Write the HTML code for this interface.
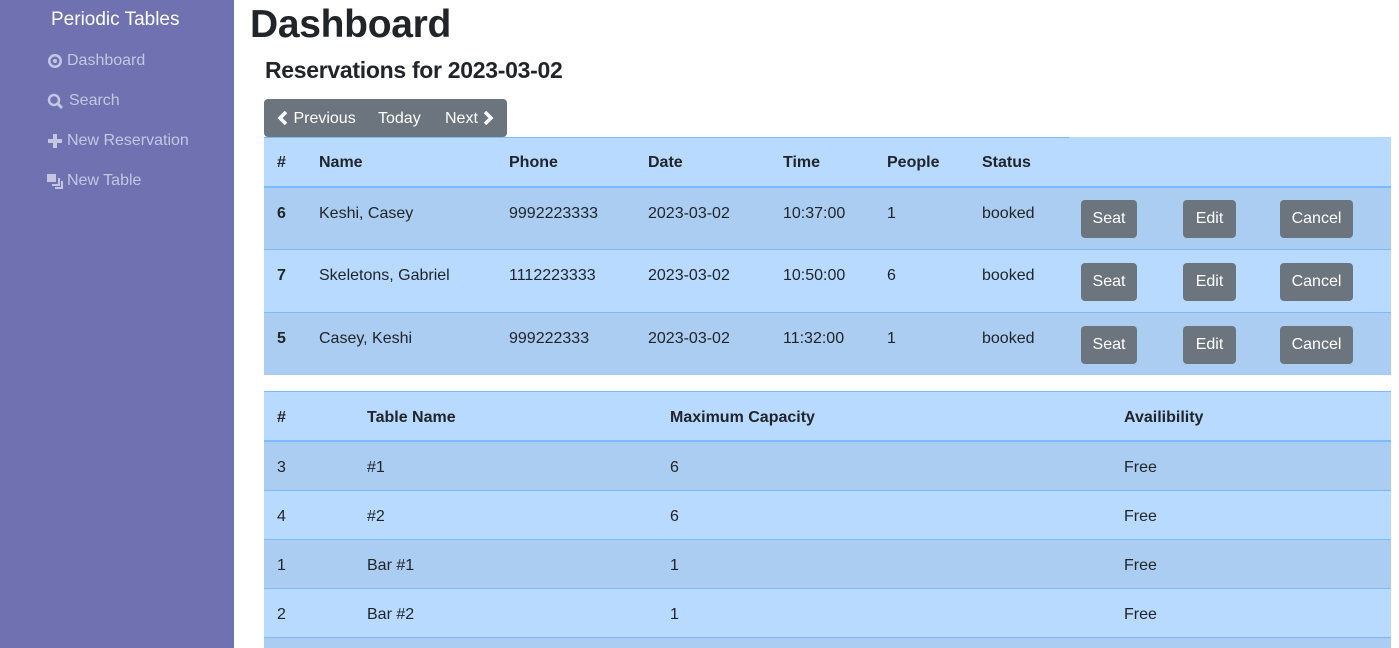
<!DOCTYPE html>
<html><head><style>
*{box-sizing:border-box;margin:0;padding:0}
html,body{width:1399px;height:648px;overflow:hidden}
body{background:#fff;font-family:"Liberation Sans",sans-serif;font-size:16px;color:#212529;position:relative}
.side{position:absolute;left:0;top:0;width:234px;height:648px;background:#6f71b1}
.brand{position:absolute;left:51px;top:9px;color:#fff;font-size:19px}
.nav{position:absolute;left:47px;color:#c4c6e2;font-size:16px;display:flex;align-items:center;gap:4px}
h1{position:absolute;left:250px;top:3px;font-size:39px;font-weight:bold;letter-spacing:-0.3px}
h4{position:absolute;left:265px;top:57px;font-size:23px;font-weight:bold;letter-spacing:-0.3px}
.grp{position:absolute;left:264px;top:99px;height:38px;width:243px;background:#6c757d;border-radius:4px;color:#fff;overflow:hidden}
.grp span{position:absolute;top:10px;line-height:19px;height:19px}
.grp svg{vertical-align:-2px}
.t{position:absolute;left:264px;width:1127px;overflow:hidden}
.r{position:absolute;left:0;width:1127px;border-top:1px solid #7abaff}
.r div{position:absolute}
.b{position:absolute;background:#6c757d;color:#fff;border-radius:4px;height:38px;line-height:38px;text-align:center}
</style></head><body>
<div class="side">
<div class="brand">Periodic Tables</div>
<div class="nav" style="top:52px"><svg width="16" height="16" viewBox="0 0 16 16"><circle cx="8" cy="8" r="7" fill="#c4c6e2"/><circle cx="8" cy="8" r="4.5" fill="#6f71b1"/><circle cx="8" cy="8" r="2" fill="#c4c6e2"/></svg>Dashboard</div>
<div class="nav" style="top:92px"><svg width="18" height="16" viewBox="0 0 18 16"><circle cx="7" cy="7" r="5" fill="none" stroke="#c4c6e2" stroke-width="2.5"/><path d="M10.5 10.5L15 15" stroke="#c4c6e2" stroke-width="3"/></svg>Search</div>
<div class="nav" style="top:132px"><svg width="16" height="16" viewBox="0 0 16 16"><path d="M6 1h4v5h5v4h-5v5H6v-5H1V6h5z" fill="#c4c6e2"/></svg>New Reservation</div>
<div class="nav" style="top:172px"><svg width="16" height="16" viewBox="0 0 16 16"><rect x="0" y="1" width="9" height="8" fill="#c4c6e2"/><path d="M11 5h2v8H5v-2h6z" fill="#c4c6e2"/><path d="M14 8h2v8H8v-2h6z" fill="#c4c6e2"/></svg>New Table</div>
</div>
<h1>Dashboard</h1>
<h4>Reservations for 2023-03-02</h4>
<div class="grp"><span style="left:13px"><svg width="12" height="14" viewBox="0 0 12 14"><path d="M9 1L3 7l6 6" fill="none" stroke="#fff" stroke-width="3.5"/></svg> Previous</span><span style="left:114px">Today</span><span style="left:181px">Next <svg width="12" height="14" viewBox="0 0 12 14"><path d="M3 1l6 6-6 6" fill="none" stroke="#fff" stroke-width="3.5"/></svg></span></div>

<div class="t" style="top:137px;height:238px">
<div class="r" style="top:0;height:50px;background:#b8daff;border-top:none;font-weight:bold"><div style="left:0;top:0;width:805px;height:1px;background:#7abaff"></div><div style="left:13px;top:17px">#</div><div style="left:55px;top:17px">Name</div><div style="left:245px;top:17px">Phone</div><div style="left:384px;top:17px">Date</div><div style="left:519px;top:17px">Time</div><div style="left:623px;top:17px">People</div><div style="left:718px;top:17px">Status</div></div>
<div class="r" style="top:49px;height:63px;background:#abcdf1;border-top:2px solid #7abaff"><div style="left:13px;top:17px;font-weight:bold">6</div><div style="left:55px;top:17px">Keshi, Casey</div><div style="left:245px;top:17px">9992223333</div><div style="left:384px;top:17px">2023-03-02</div><div style="left:519px;top:17px">10:37:00</div><div style="left:623px;top:17px">1</div><div style="left:718px;top:17px">booked</div><div class="b" style="left:817px;top:12px;width:56px">Seat</div><div class="b" style="left:919px;top:12px;width:53px">Edit</div><div class="b" style="left:1016px;top:12px;width:73px">Cancel</div></div>
<div class="r" style="top:112px;height:63px;background:#b8daff"><div style="left:13px;top:17px;font-weight:bold">7</div><div style="left:55px;top:17px">Skeletons, Gabriel</div><div style="left:245px;top:17px">1112223333</div><div style="left:384px;top:17px">2023-03-02</div><div style="left:519px;top:17px">10:50:00</div><div style="left:623px;top:17px">6</div><div style="left:718px;top:17px">booked</div><div class="b" style="left:817px;top:13px;width:56px">Seat</div><div class="b" style="left:919px;top:13px;width:53px">Edit</div><div class="b" style="left:1016px;top:13px;width:73px">Cancel</div></div>
<div class="r" style="top:175px;height:63px;background:#abcdf1"><div style="left:13px;top:17px;font-weight:bold">5</div><div style="left:55px;top:17px">Casey, Keshi</div><div style="left:245px;top:17px">999222333</div><div style="left:384px;top:17px">2023-03-02</div><div style="left:519px;top:17px">11:32:00</div><div style="left:623px;top:17px">1</div><div style="left:718px;top:17px">booked</div><div class="b" style="left:817px;top:13px;width:56px">Seat</div><div class="b" style="left:919px;top:13px;width:53px">Edit</div><div class="b" style="left:1016px;top:13px;width:73px">Cancel</div></div>
</div>

<div class="t" style="top:391px;height:257px">
<div class="r" style="top:0;height:50px;background:#b8daff;font-weight:bold"><div style="left:13px;top:17px">#</div><div style="left:103px;top:17px">Table Name</div><div style="left:406px;top:17px">Maximum Capacity</div><div style="left:860px;top:17px">Availibility</div></div>
<div class="r" style="top:49px;height:50px;background:#abcdf1;border-top:2px solid #7abaff"><div style="left:13px;top:17px">3</div><div style="left:103px;top:17px">#1</div><div style="left:406px;top:17px">6</div><div style="left:860px;top:17px">Free</div></div>
<div class="r" style="top:99px;height:49px;background:#b8daff"><div style="left:13px;top:17px">4</div><div style="left:103px;top:17px">#2</div><div style="left:406px;top:17px">6</div><div style="left:860px;top:17px">Free</div></div>
<div class="r" style="top:148px;height:49px;background:#abcdf1"><div style="left:13px;top:17px">1</div><div style="left:103px;top:17px">Bar #1</div><div style="left:406px;top:17px">1</div><div style="left:860px;top:17px">Free</div></div>
<div class="r" style="top:197px;height:49px;background:#b8daff"><div style="left:13px;top:17px">2</div><div style="left:103px;top:17px">Bar #2</div><div style="left:406px;top:17px">1</div><div style="left:860px;top:17px">Free</div></div>
<div class="r" style="top:246px;height:20px;background:#abcdf1"></div>
</div>
</body></html>
